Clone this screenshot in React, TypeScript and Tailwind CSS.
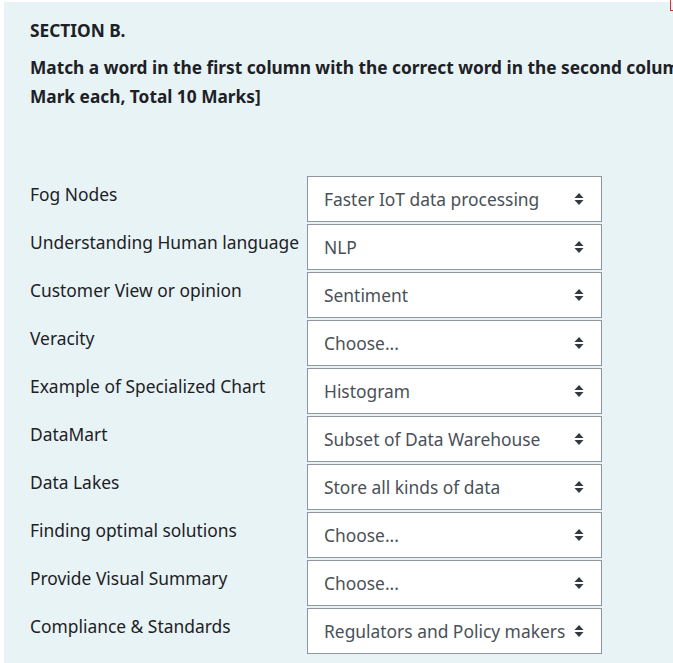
const rows = [
  { label: 'Fog Nodes', value: 'Faster IoT data processing' },
  { label: 'Understanding Human language', value: 'NLP' },
  { label: 'Customer View or opinion', value: 'Sentiment' },
  { label: 'Veracity', value: 'Choose...' },
  { label: 'Example of Specialized Chart', value: 'Histogram' },
  { label: 'DataMart', value: 'Subset of Data Warehouse' },
  { label: 'Data Lakes', value: 'Store all kinds of data' },
  { label: 'Finding optimal solutions', value: 'Choose...' },
  { label: 'Provide Visual Summary', value: 'Choose...' },
  { label: 'Compliance & Standards', value: 'Regulators and Policy makers' },
]

function Arrows() {
  return (
    <svg width="10" height="14" viewBox="0 0 10 14" className="shrink-0">
      <path d="M5 1 L9.5 6 H0.5 Z" fill="#343a40" />
      <path d="M5 13 L9.5 8 H0.5 Z" fill="#343a40" />
    </svg>
  )
}

export default function App() {
  return (
    <div className="w-[673px] h-[663px] overflow-hidden bg-white relative" style={{ fontFamily: '"Noto Sans", sans-serif' }}>
      {/* red box peeking at top right */}
      <div className="absolute left-[670px] -top-[1px] w-[20px] h-[12px] border border-[#d9322c]" />
      <div className="ml-[4px] mt-[2px] h-[700px] bg-[#e7f3f5] pl-[26px] pt-[18px] text-[#1d2125]">
        <div className="text-[17.3px] font-bold leading-[22px]">SECTION B.</div>
        <div className="mt-[11px] text-[17.3px] font-bold leading-[29px] whitespace-nowrap">
          <div>Match a word in the first column with the correct word in the second column. [1</div>
          <div>Mark each, Total 10 Marks]</div>
        </div>

        <div className="mt-[65px] flex flex-col gap-[2px]">
          {rows.map((r, i) => (
            <div key={i} className="flex items-start h-[46px]">
              <div className="w-[277px] pt-[6px] text-[17.4px] leading-[24px]">{r.label}</div>
              <div className="w-[295px] h-[46px] border border-[#8f959e] bg-white flex items-center justify-between pl-[16px] pr-[17px] text-[17.4px] text-[#495057]">
                <span className="whitespace-nowrap">{r.value}</span>
                <Arrows />
              </div>
            </div>
          ))}
        </div>
      </div>
    </div>
  )
}
